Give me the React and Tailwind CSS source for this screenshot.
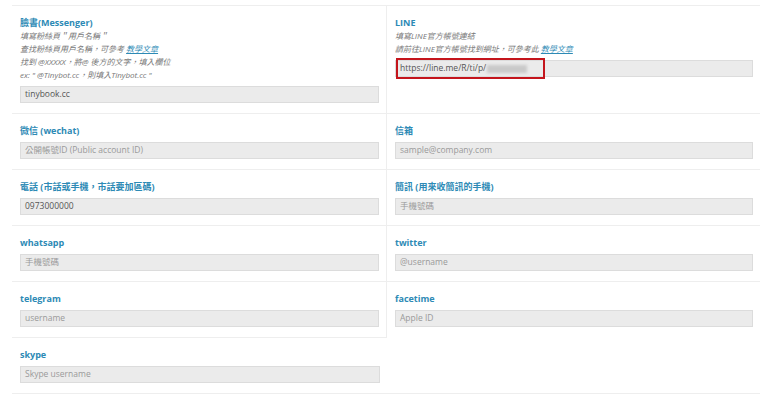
import React from 'react';

const font = { fontFamily: '"Open Sans", "Noto Sans CJK TC", sans-serif' };

function Field({ label, hints, value, placeholder, children, className = '' }) {
    return (
        <div className={`pt-[10px] pb-[10px] pl-2 pr-[7px] border-b border-[#eeeeee] ${className}`}>
            <div className="text-[9px] leading-[13px] font-bold text-[#2d8ab5]">{label}</div>
            {hints && (
                <div className="text-[8px] leading-[13px] italic text-[#777]">
                    {hints}
                </div>
            )}
            <div className="mt-[5px] relative">
                {children || (
                    <div className="h-[17px] bg-[#ebebeb] border border-[#dcdcdc] px-[4px] flex items-center text-[8.5px]">
                        {value ? (
                            <span className="text-[#555]">{value}</span>
                        ) : (
                            <span className="text-[#9a9a9a]">{placeholder}</span>
                        )}
                    </div>
                )}
            </div>
        </div>
    );
}

function TutorialLink() {
    return <span className="text-[#2d8ab5] underline">教學文章</span>;
}

export default function App() {
    return (
        <div className="bg-white w-[768px] h-[399px] overflow-hidden" style={font}>
            <div className="ml-3 mt-[5px] w-[748px] border-t border-[#eeeeee]">
                <div className="grid grid-cols-[375px_373px]">
                    {/* row 1 */}
                    <Field
                        className="border-r"
                        label="臉書(Messenger)"
                        value="tinybook.cc"
                        hints={
                            <>
                                <div>填寫粉絲頁＂用戶名稱＂</div>
                                <div>查找粉絲頁用戶名稱，可參考 <TutorialLink /></div>
                                <div>找到 @XXXXX，將@ 後方的文字，填入欄位</div>
                                <div>ex: " @Tinybot.cc，則填入Tinybot.cc "</div>
                            </>
                        }
                    />
                    <Field
                        label="LINE"
                        hints={
                            <>
                                <div>填寫LINE官方帳號連結</div>
                                <div>請前往LINE官方帳號找到網址，可參考此 <TutorialLink /></div>
                            </>
                        }
                    >
                        <div className="h-[17px] bg-[#ebebeb] border border-[#dcdcdc] px-[4px] flex items-center text-[8.5px] text-[#555]">
                            https://line.me/R/ti/p/
                            <span className="ml-[1px] w-[40px] h-[8px] bg-[#c9c9c9] blur-[1.5px]"></span>
                        </div>
                        <div className="absolute left-[1px] top-[-2px] w-[149px] h-[21px] border-2 border-[#c4151c]"></div>
                    </Field>

                    {/* row 2 */}
                    <Field className="border-r" label="微信 (wechat)" placeholder="公開帳號ID (Public account ID)" />
                    <Field label="信箱" placeholder="sample@company.com" />

                    {/* row 3 */}
                    <Field className="border-r" label="電話 (市話或手機，市話要加區碼)" value="0973000000" />
                    <Field label="簡訊 (用來收簡訊的手機)" placeholder="手機號碼" />

                    {/* row 4 */}
                    <Field className="border-r" label="whatsapp" placeholder="手機號碼" />
                    <Field label="twitter" placeholder="@username" />

                    {/* row 5 */}
                    <Field className="border-r" label="telegram" placeholder="username" />
                    <Field className="border-b-0" label="facetime" placeholder="Apple ID" />
                </div>

                {/* skype row */}
                <div className="border-b border-[#eeeeee]">
                    <div className="w-[375px]">
                        <Field className="border-b-0" label="skype" placeholder="Skype username" />
                    </div>
                </div>
            </div>
        </div>
    );
}
